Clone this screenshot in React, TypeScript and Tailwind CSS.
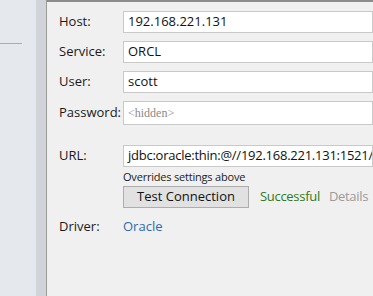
import React from "react";

function Field({ label, children }: { label: string; children: React.ReactNode }) {
  return (
    <div className="flex items-center h-[22px]">
      <div className="w-[64px] shrink-0 text-[13px] text-[#1a1a1a]">{label}</div>
      {children}
    </div>
  );
}

function Input({ value, tight }: { value: string; tight?: boolean }) {
  return (
    <div
      className={
        tight
          ? "h-[22px] flex-1 min-w-0 bg-white border border-[#c9c9c9] flex items-center pl-[4px] text-[13px] text-[#111] whitespace-nowrap overflow-hidden tracking-[-0.25px]"
          : "h-[22px] flex-1 min-w-0 bg-white border border-[#c9c9c9] flex items-center pl-[4px] text-[13px] text-[#111] whitespace-nowrap overflow-hidden"
      }
    >
      {value}
    </div>
  );
}

export default function App() {
  return (
    <div className="flex w-[373px] h-[296px] overflow-hidden font-['Segoe_UI','Open_Sans',sans-serif]">
      <div className="w-[36px] shrink-0 bg-[#e5e8ec] pt-[43px]">
        <div className="w-[22px] h-px bg-[#a9acb0]" />
      </div>
      <div className="w-[10px] shrink-0 bg-[#d0d3d7]" />
      <div className="w-px shrink-0 bg-[#9a9a9a]" />
      <div className="flex-1 min-w-0 bg-[#f0f0f0] border-t-2 border-[#8c8c8c] pl-[12px] pt-[9px] flex flex-col">
        <Field label="Host:">
          <Input value="192.168.221.131" />
        </Field>
        <div className="mt-[8px]">
          <Field label="Service:">
            <Input value="ORCL" />
          </Field>
        </div>
        <div className="mt-[8px]">
          <Field label="User:">
            <Input value="scott" />
          </Field>
        </div>
        <div className="mt-[8px] flex items-center h-[24px]">
          <div className="w-[64px] shrink-0 text-[13px] text-[#1a1a1a]">Password:</div>
          <div className="h-[24px] flex-1 min-w-0 bg-white border border-[#c9c9c9] flex items-center pl-[4px] text-[12px] text-[#8a8a8a] font-['Liberation_Serif',serif]">
            &lt;hidden&gt;
          </div>
        </div>
        <div className="mt-[20px]">
          <Field label="URL:">
            <Input value="jdbc:oracle:thin:@//192.168.221.131:1521/ORCL" tight />
          </Field>
        </div>
        <div className="pl-[64px] mt-[2px] text-[11px] text-[#222] leading-[16px] tracking-[-0.2px]">
          Overrides settings above
        </div>
        <div className="pl-[64px] mt-[1px] flex items-center whitespace-nowrap">
          <button className="w-[126px] h-[22px] shrink-0 bg-[#e1e1e1] border border-[#adadad] text-[13px] text-[#111]">
            Test Connection
          </button>
          <span className="ml-[11px] text-[13px] tracking-[-0.3px] text-[#2f7a1c]">Successful</span>
          <span className="ml-[9px] text-[13px] tracking-[-0.3px] text-[#9a9a9a]">Details</span>
        </div>
        <div className="mt-[9px] flex items-center h-[20px]">
          <div className="w-[64px] shrink-0 text-[13px] text-[#1a1a1a]">Driver:</div>
          <span className="text-[13px] text-[#2b6cb0]">Oracle</span>
        </div>
      </div>
    </div>
  );
}
